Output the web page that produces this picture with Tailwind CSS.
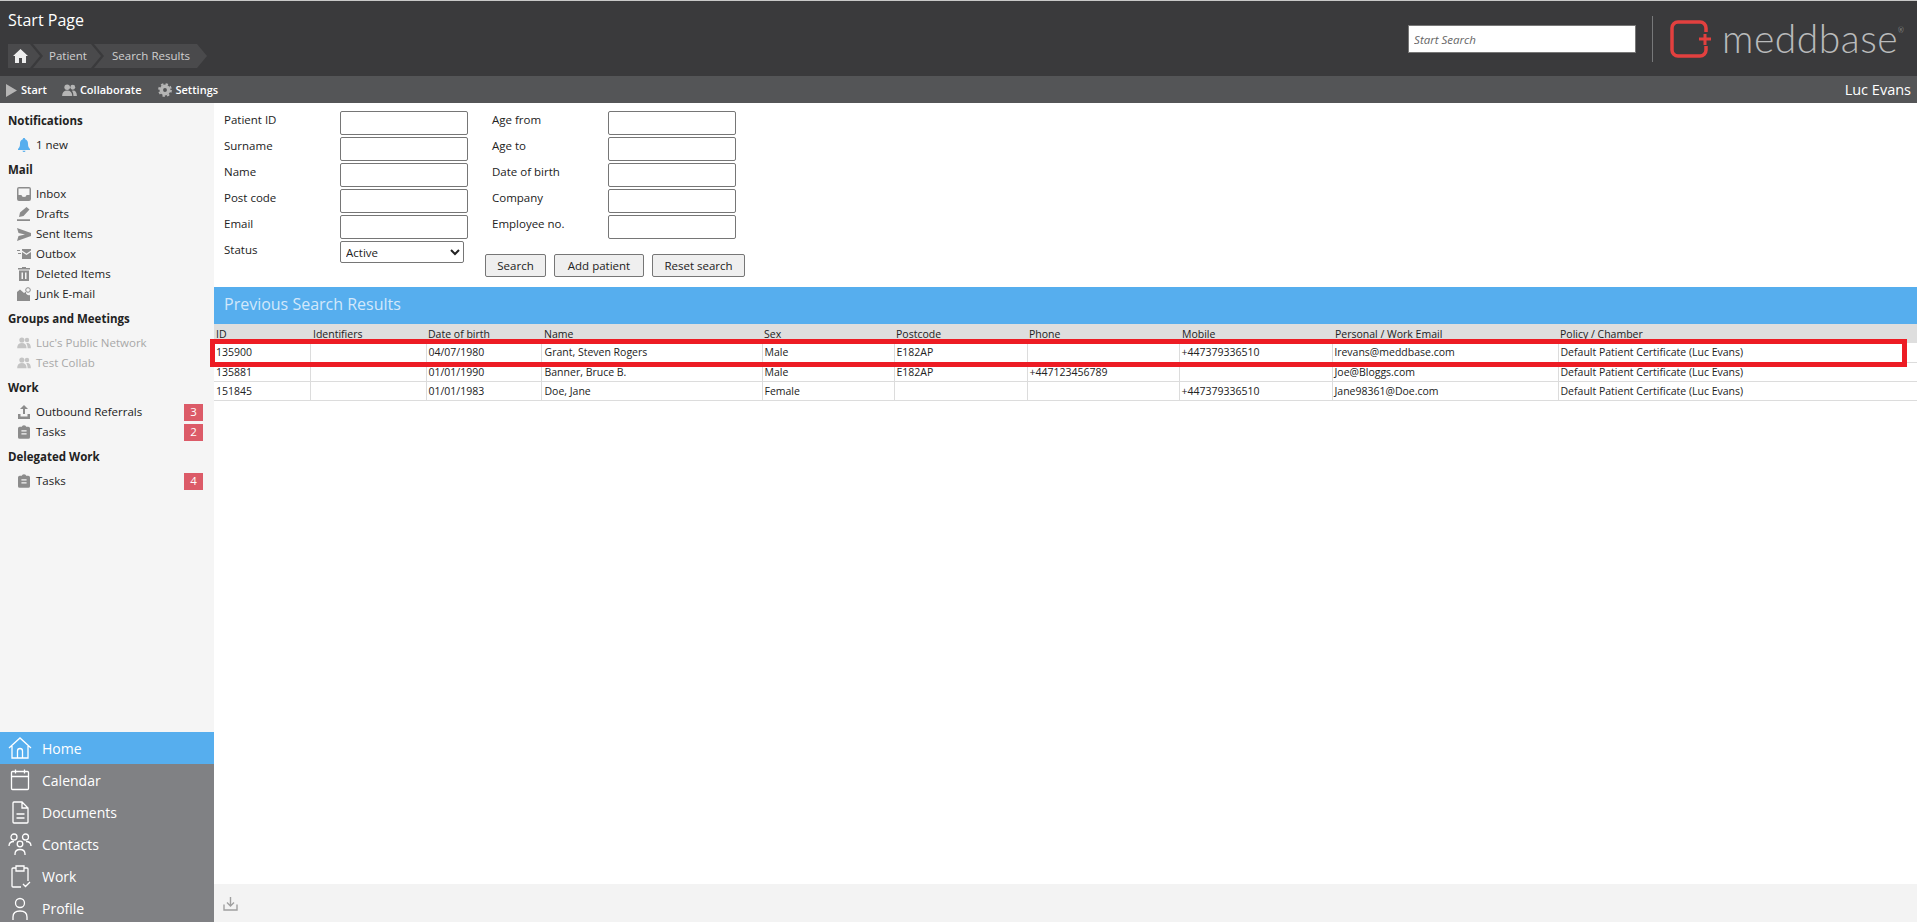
<!DOCTYPE html>
<html lang="en" class="h-[922px] overflow-hidden">
<head>
  <meta charset="UTF-8">
  <title>Start Page - meddbase</title>
  <script src="https://cdn.jsdelivr.net/npm/@tailwindcss/browser@4"></script>
</head>
<body class="h-[922px] w-full overflow-hidden bg-white font-['Open_Sans',sans-serif] text-[11.5px] text-[#222]">

  <!-- shared icons -->
  <svg class="hidden">
    <symbol id="people" viewBox="0 0 16 14"><circle cx="5.500" cy="3.500" r="3"/><circle cx="11.500" cy="3.500" r="2.600"/><path d="M0 13c0-4 2-6 5.500-6S11 9 11 13z"/><path d="M12 7c2.500 0 4 2 4 6h-3.800c0-2.500-.5-4.300-1.700-5.800z"/></symbol>
    <symbol id="clip" viewBox="0 0 14 16"><path d="M2 2h2.500a2.500 2 0 0 1 5 0H12a2 2 0 0 1 2 2v10a2 2 0 0 1-2 2H2a2 2 0 0 1-2-2V4a2 2 0 0 1 2-2zM4 6v1.500h6V6zm0 3.500V11h6V9.500z" fill-rule="evenodd"/></symbol>
  </svg>

  <!-- Header -->
  <header class="flex h-[76px] justify-between border-t border-[#c8c8c8] bg-[#3a3a3c]">
    <div class="pl-2">
      <h1 class="mt-[7px] text-[16px] leading-[24px] text-white">Start Page</h1>
      <nav class="mt-[12px] flex h-[24px] text-[11.5px] text-[#d0d0d0]">
        <a class="flex w-[32px] items-center bg-[#4a4a4c] pl-[5px] [clip-path:polygon(0_0,22px_0,32px_50%,22px_100%,0_100%)]">
          <svg class="h-[14px] w-[15px]" viewBox="0 0 15 14" fill="#eee"><path d="M7.500 0 15 7h-2v7H9V9H6v5H2V7H0z"/></svg>
        </a>
        <a class="-ml-[7px] flex w-[68px] items-center bg-[#4a4a4c] pl-[16px] [clip-path:polygon(0_0,58px_0,68px_50%,58px_100%,0_100%,10px_50%)]">Patient</a>
        <a class="-ml-[7px] flex w-[113px] items-center bg-[#4a4a4c] pl-[18px] [clip-path:polygon(0_0,103px_0,113px_50%,103px_100%,0_100%,10px_50%)]">Search Results</a>
      </nav>
    </div>
    <div class="flex items-start pr-[13px]">
      <input class="mt-[24px] h-[28px] w-[228px] border border-[#777] bg-white px-[5px] text-[11.5px] italic placeholder:text-[#666]" placeholder="Start Search">
      <div class="mt-[15px] ml-[16px] h-[46px] w-px bg-[#77787a]"></div>
      <svg class="mt-[18px] ml-[16px] h-[40px] w-[44px]" viewBox="0 0 44 40" fill="none" stroke="#e2403f" stroke-width="3.500">
        <path d="M37 13v-4a6 6 0 0 0-6-6H9a6 6 0 0 0-6 6v22a6 6 0 0 0 6 6h22a6 6 0 0 0 6-6v-4"/>
        <path d="M30 20h12M36 15v11" stroke-width="3"/>
      </svg>
      <div class="mt-[13px] ml-[9px] flex items-start font-['Lato',sans-serif] font-light text-[#b9babb]">
        <span class="text-[39px] leading-[48px] tracking-[0.5px]">meddbase</span>
        <span class="mt-[11px] text-[7px] leading-[10px]">®</span>
      </div>
    </div>
  </header>

  <!-- Toolbar -->
  <div class="flex h-[27px] items-center justify-between bg-[#545557] pt-[1px] pr-[6px] text-[11px] font-semibold text-white">
    <div class="flex items-center">
      <svg class="ml-[6px] h-[13px] w-[11px]" viewBox="0 0 11 13" fill="#b5b5b5"><path d="M0 0l11 6.500L0 13z"/></svg>
      <span class="ml-[4px]">Start</span>
      <svg class="ml-[15px] h-[13px] w-[15px]" fill="#b5b5b5"><use href="#people"/></svg>
      <span class="ml-[3px]">Collaborate</span>
      <svg class="ml-[17px] h-[14px] w-[14px]" viewBox="0 0 14 14" fill="none" stroke="#b5b5b5"><circle cx="7" cy="7" r="3.700" stroke-width="3.500"/><circle cx="7" cy="7" r="6" stroke-width="1.800" stroke-dasharray="2.400 2.300"/></svg>
      <span class="ml-[3px]">Settings</span>
    </div>
    <span class="text-[14.5px] font-normal">Luc Evans</span>
  </div>

  <div class="flex h-[819px]">
    <!-- Sidebar -->
    <aside class="flex w-[214px] shrink-0 flex-col bg-[#f5f5f5]">
      <div class="flex-1 pt-[5px]">
        <h3 class="h-[25px] pl-2 leading-[25px] font-bold">Notifications</h3>
        <ul class="mt-[2px] mb-[2px]">
          <li class="flex h-[20px] items-center pl-[18px]">
            <svg class="mr-[6px] h-[14px] w-[12px]" viewBox="0 0 12 14" fill="#56aeee"><path d="M6 0c.8 0 1.200.5 1.200 1.200C9.300 1.800 10 3.500 10 6c0 2.500.8 3.800 2 5v1H0v-1c1.200-1.200 2-2.500 2-5 0-2.500.7-4.200 2.800-4.800C4.800.5 5.200 0 6 0zM4.500 12.800h3a1.500 1.200 0 0 1-3 0z"/></svg>
            1 new
          </li>
        </ul>
        <h3 class="h-[25px] pl-2 leading-[25px] font-bold">Mail</h3>
        <ul class="mt-[2px] mb-[2px]">
          <li class="flex h-[20px] items-center pl-[17px]">
            <svg class="mr-[5px] h-[14px] w-[14px]" viewBox="0 0 14 14" fill="#8c8c8c"><path d="M2 0h10a2 2 0 0 1 2 2v10a2 2 0 0 1-2 2H2a2 2 0 0 1-2-2V2a2 2 0 0 1 2-2zm-.5 1.500V8H4.500a2.500 2 0 0 0 5 0h3V1.500z" fill-rule="evenodd"/></svg>
            Inbox
          </li>
          <li class="flex h-[20px] items-center pl-[17px]">
            <svg class="mr-[5px] h-[14px] w-[14px]" viewBox="0 0 14 14" fill="#8c8c8c"><path d="M9.500 0l3 2.500-6 6.500-4.500 1 1-4.500zM0 12.300h13V14H0z"/></svg>
            Drafts
          </li>
          <li class="flex h-[20px] items-center pl-[17px]">
            <svg class="mr-[5px] h-[13px] w-[14px]" viewBox="0 0 14 13" fill="#8c8c8c"><path d="M0 0l14 5v3L0 13l1.500-5L8 6.500 1.500 5z"/></svg>
            Sent Items
          </li>
          <li class="flex h-[20px] items-center pl-[17px]">
            <svg class="mr-[5px] h-[10px] w-[14px]" viewBox="0 0 14 10" fill="#8c8c8c"><path d="M5 0h9v1.500L9.500 4.500 5 1.500zM5 3l4.500 3L14 3v7H5zM0 1h3v1H0zM1 4h3v1H1z"/></svg>
            Outbox
          </li>
          <li class="flex h-[20px] items-center pl-[18px]">
            <svg class="mr-[6px] h-[14px] w-[12px]" viewBox="0 0 12 14" fill="#8c8c8c"><path d="M4 0h4v1h4v1.500H0V1h4zM1 3.500h10V14H1zM3.500 5.500V12H5V5.500zM7 5.500V12h1.500V5.500z" fill-rule="evenodd"/></svg>
            Deleted Items
          </li>
          <li class="flex h-[20px] items-center pl-[17px]">
            <svg class="mr-[5px] h-[14px] w-[14px]" viewBox="0 0 14 14" fill="#8c8c8c"><path d="M0 5l3-2.500L7 6l2-1.200v1.700a3.500 3.500 0 0 0 4 1.500V14H0z"/><circle cx="11" cy="3" r="2.300" fill="none" stroke="#8c8c8c" stroke-width="1"/></svg>
            Junk E-mail
          </li>
        </ul>
        <h3 class="h-[25px] pl-2 leading-[25px] font-bold">Groups and Meetings</h3>
        <ul class="mt-[2px] mb-[2px] text-[#a8a8a8]">
          <li class="flex h-[20px] items-center pl-[17px]">
            <svg class="mr-[5px] h-[12px] w-[14px]" fill="#c4c4c4"><use href="#people"/></svg>
            Luc's Public Network
          </li>
          <li class="flex h-[20px] items-center pl-[17px]">
            <svg class="mr-[5px] h-[12px] w-[14px]" fill="#c4c4c4"><use href="#people"/></svg>
            Test Collab
          </li>
        </ul>
        <h3 class="h-[25px] pl-2 leading-[25px] font-bold">Work</h3>
        <ul class="mt-[2px] mb-[2px]">
          <li class="flex h-[20px] items-center pl-[18px]">
            <svg class="mr-[6px] h-[14px] w-[12px]" viewBox="0 0 12 14" fill="#8c8c8c"><path d="M6 0l4 4H7v5H5V4H2zM0 9h2.500v2.500h7V9H12v5H0z"/></svg>
            Outbound Referrals
            <span class="mr-[11px] ml-auto flex h-[17px] w-[19px] items-center justify-center bg-[#dc5b68] text-white">3</span>
          </li>
          <li class="flex h-[20px] items-center pl-[18px]">
            <svg class="mr-[6px] h-[14px] w-[12px]" fill="#8c8c8c"><use href="#clip"/></svg>
            Tasks
            <span class="mr-[11px] ml-auto flex h-[17px] w-[19px] items-center justify-center bg-[#dc5b68] text-white">2</span>
          </li>
        </ul>
        <h3 class="h-[25px] pl-2 leading-[25px] font-bold">Delegated Work</h3>
        <ul class="mt-[2px]">
          <li class="flex h-[20px] items-center pl-[18px]">
            <svg class="mr-[6px] h-[14px] w-[12px]" fill="#8c8c8c"><use href="#clip"/></svg>
            Tasks
            <span class="mr-[11px] ml-auto flex h-[17px] w-[19px] items-center justify-center bg-[#dc5b68] text-white">4</span>
          </li>
        </ul>
      </div>

      <!-- Bottom nav, last row is cut off by the window -->
      <nav class="h-[190px] shrink-0 overflow-hidden bg-[#808184] text-[14px] text-white">
        <a class="flex h-[32px] items-center bg-[#56aeee] pl-[8px]">
          <svg class="mr-[10px] h-[24px] w-[24px]" viewBox="0 0 24 24" fill="none" stroke="white" stroke-width="1.300"><path d="M1 12 12 2l11 10M4 10v12h16V10M9.500 22v-7a2.500 2.500 0 0 1 5 0v7"/></svg>
          Home
        </a>
        <a class="flex h-[32px] items-center pl-[8px]">
          <svg class="mr-[10px] h-[24px] w-[24px]" viewBox="0 0 24 24" fill="none" stroke="white" stroke-width="1.300"><rect x="3.500" y="3.500" width="17" height="18" rx="1"/><path d="M3.500 8.500h17M7.500 1.500v4M16.500 1.500v4"/></svg>
          Calendar
        </a>
        <a class="flex h-[32px] items-center pl-[8px]">
          <svg class="mr-[10px] h-[24px] w-[24px]" viewBox="0 0 24 24" fill="none" stroke="white" stroke-width="1.300"><path d="M5 3a1 1 0 0 1 1-1h8l6 6v14a1 1 0 0 1-1 1H6a1 1 0 0 1-1-1zM14 2v6h6M8.500 14h8M8.500 18h8"/></svg>
          Documents
        </a>
        <a class="flex h-[32px] items-center pl-[8px]">
          <svg class="mr-[10px] h-[24px] w-[24px]" viewBox="0 0 24 24" fill="none" stroke="white" stroke-width="1.300"><circle cx="6" cy="5" r="3"/><circle cx="17.500" cy="5" r="3"/><circle cx="12" cy="12" r="2.800"/><path d="M1 14c0-3 2-4.500 5-4.500M23 14c0-3-2-4.500-5-4.500M7 23v-1c0-3 2-4.500 5-4.500s5 1.500 5 4.500v1"/></svg>
          Contacts
        </a>
        <a class="flex h-[32px] items-center pl-[8px]">
          <svg class="mr-[10px] h-[24px] w-[24px]" viewBox="0 0 24 24" fill="none" stroke="white" stroke-width="1.300"><path d="M8 4H5a1 1 0 0 0-1 1v17a1 1 0 0 0 1 1h8M16 4h3a1 1 0 0 1 1 1v12M8 2h8v5H8zM15 20l2.500 2.500L22 18"/></svg>
          Work
        </a>
        <a class="flex h-[32px] items-center pl-[8px]">
          <svg class="mr-[10px] h-[24px] w-[24px]" viewBox="0 0 24 24" fill="none" stroke="white" stroke-width="1.300"><circle cx="12" cy="7" r="4.500"/><path d="M5 24v-3c0-4 3-6 7-6s7 2 7 6v3"/></svg>
          Profile
        </a>
      </nav>
    </aside>

    <!-- Main -->
    <main class="relative flex min-w-0 flex-1 flex-col">
      <form class="flex h-[184px] pt-[8px] pl-[10px]">
        <div class="w-[268px]">
          <div class="mb-[2px] flex h-[24px]"><label class="w-[116px] leading-[18px]">Patient ID</label><input class="h-[24px] w-[128px] rounded-[2px] border border-[#767676]"></div>
          <div class="mb-[2px] flex h-[24px]"><label class="w-[116px] leading-[18px]">Surname</label><input class="h-[24px] w-[128px] rounded-[2px] border border-[#767676]"></div>
          <div class="mb-[2px] flex h-[24px]"><label class="w-[116px] leading-[18px]">Name</label><input class="h-[24px] w-[128px] rounded-[2px] border border-[#767676]"></div>
          <div class="mb-[2px] flex h-[24px]"><label class="w-[116px] leading-[18px]">Post code</label><input class="h-[24px] w-[128px] rounded-[2px] border border-[#767676]"></div>
          <div class="mb-[2px] flex h-[24px]"><label class="w-[116px] leading-[18px]">Email</label><input class="h-[24px] w-[128px] rounded-[2px] border border-[#767676]"></div>
          <div class="flex h-[24px]"><label class="w-[116px] leading-[18px]">Status</label>
            <select class="h-[22px] w-[124px] rounded-[2px] border border-[#767676] bg-white pl-[1px] text-[11.5px]"><option>Active</option></select>
          </div>
        </div>
        <div>
          <div class="mb-[2px] flex h-[24px]"><label class="w-[116px] leading-[18px]">Age from</label><input class="h-[24px] w-[128px] rounded-[2px] border border-[#767676]"></div>
          <div class="mb-[2px] flex h-[24px]"><label class="w-[116px] leading-[18px]">Age to</label><input class="h-[24px] w-[128px] rounded-[2px] border border-[#767676]"></div>
          <div class="mb-[2px] flex h-[24px]"><label class="w-[116px] leading-[18px]">Date of birth</label><input class="h-[24px] w-[128px] rounded-[2px] border border-[#767676]"></div>
          <div class="mb-[2px] flex h-[24px]"><label class="w-[116px] leading-[18px]">Company</label><input class="h-[24px] w-[128px] rounded-[2px] border border-[#767676]"></div>
          <div class="mb-[2px] flex h-[24px]"><label class="w-[116px] leading-[18px]">Employee no.</label><input class="h-[24px] w-[128px] rounded-[2px] border border-[#767676]"></div>
          <div class="mt-[15px] -ml-[7px] flex gap-[8px]">
            <button type="button" class="h-[23px] w-[61px] rounded-[2px] border border-[#767676] bg-[#efefef]">Search</button>
            <button type="button" class="h-[23px] w-[90px] rounded-[2px] border border-[#767676] bg-[#efefef]">Add patient</button>
            <button type="button" class="h-[23px] w-[93px] rounded-[2px] border border-[#767676] bg-[#efefef]">Reset search</button>
          </div>
        </div>
      </form>

      <h2 class="h-[37px] bg-[#56aeee] pl-[10px] text-[16px] leading-[35px] text-[#d2e8fb]">Previous Search Results</h2>

      <table class="w-full table-fixed border-collapse text-[10.5px]">
        <colgroup>
          <col class="w-[96px]"><col class="w-[116px]"><col class="w-[115px]"><col class="w-[221px]"><col class="w-[132px]"><col class="w-[133px]"><col class="w-[152px]"><col class="w-[153px]"><col class="w-[226px]"><col>
        </colgroup>
        <thead>
          <tr class="h-[18px] bg-[#dedede] text-left">
            <th class="px-[2px] pt-[3px] font-normal">ID</th>
            <th class="pt-[3px] pr-[2px] pl-[3px] font-normal">Identifiers</th>
            <th class="px-[2px] pt-[3px] font-normal">Date of birth</th>
            <th class="pt-[3px] pr-[2px] pl-[3px] font-normal">Name</th>
            <th class="px-[2px] pt-[3px] font-normal">Sex</th>
            <th class="px-[2px] pt-[3px] font-normal">Postcode</th>
            <th class="px-[2px] pt-[3px] font-normal">Phone</th>
            <th class="pt-[3px] pr-[2px] pl-[3px] font-normal">Mobile</th>
            <th class="pt-[3px] pr-[2px] pl-[3px] font-normal">Personal / Work Email</th>
            <th class="px-[2px] pt-[3px] font-normal">Policy / Chamber</th>
          </tr>
        </thead>
        <tbody>
          <tr class="h-[20px] border-b border-[#dcdcdc]">
            <td class="px-[2px] pt-[1px]">135900</td>
            <td class="border-l border-[#dcdcdc] px-[2px] pt-[1px]"></td>
            <td class="border-l border-[#dcdcdc] px-[2px] pt-[1px]">04/07/1980</td>
            <td class="border-l border-[#dcdcdc] pt-[1px] pr-[2px] pl-[3px]">Grant, Steven Rogers</td>
            <td class="border-l border-[#dcdcdc] px-[2px] pt-[1px]">Male</td>
            <td class="border-l border-[#dcdcdc] px-[2px] pt-[1px]">E182AP</td>
            <td class="border-l border-[#dcdcdc] px-[2px] pt-[1px]"></td>
            <td class="border-l border-[#dcdcdc] px-[2px] pt-[1px]">+447379336510</td>
            <td class="border-l border-[#dcdcdc] px-[2px] pt-[1px]">lrevans@meddbase.com</td>
            <td class="border-l border-[#dcdcdc] px-[2px] pt-[1px]">Default Patient Certificate (Luc Evans)</td>
          </tr>
          <tr class="h-[19px] border-b border-[#dcdcdc]">
            <td class="px-[2px] pt-[1px]">135881</td>
            <td class="border-l border-[#dcdcdc] px-[2px] pt-[1px]"></td>
            <td class="border-l border-[#dcdcdc] px-[2px] pt-[1px]">01/01/1990</td>
            <td class="border-l border-[#dcdcdc] pt-[1px] pr-[2px] pl-[3px]">Banner, Bruce B.</td>
            <td class="border-l border-[#dcdcdc] px-[2px] pt-[1px]">Male</td>
            <td class="border-l border-[#dcdcdc] px-[2px] pt-[1px]">E182AP</td>
            <td class="border-l border-[#dcdcdc] px-[2px] pt-[1px]">+447123456789</td>
            <td class="border-l border-[#dcdcdc] px-[2px] pt-[1px]"></td>
            <td class="border-l border-[#dcdcdc] px-[2px] pt-[1px]">Joe@Bloggs.com</td>
            <td class="border-l border-[#dcdcdc] px-[2px] pt-[1px]">Default Patient Certificate (Luc Evans)</td>
          </tr>
          <tr class="h-[19px] border-b border-[#dcdcdc]">
            <td class="px-[2px] pt-[1px]">151845</td>
            <td class="border-l border-[#dcdcdc] px-[2px] pt-[1px]"></td>
            <td class="border-l border-[#dcdcdc] px-[2px] pt-[1px]">01/01/1983</td>
            <td class="border-l border-[#dcdcdc] pt-[1px] pr-[2px] pl-[3px]">Doe, Jane</td>
            <td class="border-l border-[#dcdcdc] px-[2px] pt-[1px]">Female</td>
            <td class="border-l border-[#dcdcdc] px-[2px] pt-[1px]"></td>
            <td class="border-l border-[#dcdcdc] px-[2px] pt-[1px]"></td>
            <td class="border-l border-[#dcdcdc] px-[2px] pt-[1px]">+447379336510</td>
            <td class="border-l border-[#dcdcdc] px-[2px] pt-[1px]">Jane98361@Doe.com</td>
            <td class="border-l border-[#dcdcdc] px-[2px] pt-[1px]">Default Patient Certificate (Luc Evans)</td>
          </tr>
        </tbody>
      </table>

      <!-- red annotation round the first result -->
      <div class="absolute top-[236px] -left-[4px] h-[28px] w-[1697px] border-[5px] border-[#ed1c24]"></div>

      <footer class="mt-auto flex h-[38px] items-center bg-[#f3f3f3] pl-[9px]">
        <svg class="h-[15px] w-[15px]" viewBox="0 0 15 15" fill="none" stroke="#a0a0a0" stroke-width="1.400"><path d="M7.500 1v8.500M4 6.500l3.500 3.500L11 6.500M1 8.500V14h13V8.500"/></svg>
      </footer>
    </main>
  </div>
</body>
</html>
